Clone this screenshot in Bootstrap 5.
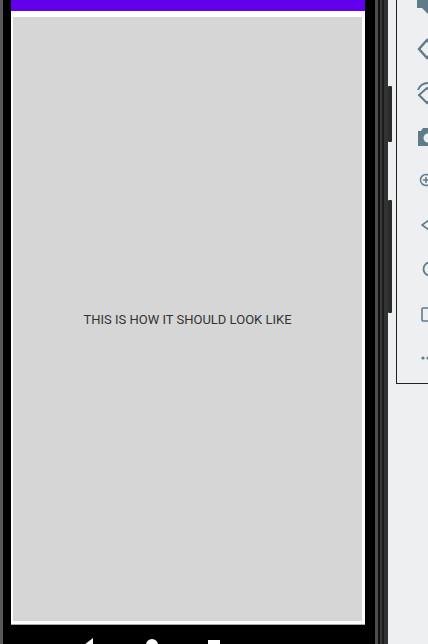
<!doctype html>
<html lang="en">
<head>
<meta charset="utf-8">
<title>Emulator preview</title>
<link href="https://cdn.jsdelivr.net/npm/bootstrap@5.3.0/dist/css/bootstrap.min.css" rel="stylesheet">
<style>
html,body{height:644px;overflow:hidden;margin:0;background:#eeeff1}
.stage{width:428px;height:644px;overflow:hidden}
.device{width:388px;height:644px;flex:none;position:relative;background:#000;border-left:3px solid #58585a;padding-left:8px}
.device-rim{width:13px;flex:none;margin-left:10px;background:linear-gradient(90deg,#4d4d4d 0,#4d4d4d 3px,#111 3px,#111 5px,#3a3a3a 5px,#3a3a3a 7px,#1c1c1c 7px,#1c1c1c 9px,#333 9px,#333 13px)}
.screen-col{width:354px;flex:none;height:644px}
.app-bar{height:11px;flex:none;background:#6200ee}
.app-body{height:614px;flex:none;background:#fff;padding:6px 3px 3px 2px;border-bottom:1px solid #aaa}
.app-card{background:#d6d6d6;color:#333;font:13px/1 Roboto,sans-serif;height:100%}
.nav-keys{flex:1;padding:13px 0 0 72px}
.nav-keys svg{display:block;flex:none}
.side-key{position:absolute;left:385px;width:4px;background:#2b2b2b;border-radius:1px}
.side-a{top:86px;height:56px}
.side-b{top:200px;height:113px}
.tool-panel{width:32px;height:384px;flex:none;margin-left:8px;border:1px solid #222;border-width:0 0 1px 1px;overflow:hidden;padding:0 0 0 20px;background:#eeeff1}
.tool-slot{height:44.5px;flex:none;width:24px}
.tool-slot svg{display:block}
.tool-list{margin-top:-8px}
.nudge-s{margin-left:1px}
.nudge-m{margin-left:2px}
.nudge-l{margin-left:4px}
</style>
</head>
<body>
<div class="stage d-flex">
  <div class="device d-flex">
    <div class="screen-col d-flex flex-column">
      <div class="app-bar"></div>
      <div class="app-body">
        <div class="app-card d-flex align-items-center justify-content-center">THIS IS HOW IT SHOULD LOOK LIKE</div>
      </div>
      <div class="nav-keys d-flex">
        <svg width="14" height="14" viewBox="0 0 14 14"><path d="M10 0v14L1 7z" fill="#fff"/></svg>
        <svg class="ms-5 nudge-s" width="14" height="14" viewBox="0 0 14 14"><circle cx="7" cy="7" r="6" fill="#fff"/></svg>
        <svg class="ms-5" width="14" height="14" viewBox="0 0 14 14"><rect x="1" y="2" width="12" height="12" fill="#fff"/></svg>
      </div>
    </div>
    <div class="device-rim"></div>
    <div class="side-key side-a"></div>
    <div class="side-key side-b"></div>
  </div>
  <div class="tool-panel">
    <div class="tool-list d-flex flex-column">
      <div class="tool-slot"><svg width="24" height="24" viewBox="0 0 24 24" fill="#5f7a89"><path d="M0 8h5l6-6v20l-6-6H0z"/></svg></div>
      <div class="tool-slot"><svg width="24" height="24" viewBox="0 0 24 24" fill="none" stroke="#5f7a89" stroke-width="2.4"><path d="M10 3 2 12l8 9 8-9z"/></svg></div>
      <div class="tool-slot"><svg width="24" height="24" viewBox="0 0 24 24" fill="none" stroke="#5f7a89" stroke-width="2"><path d="M10 7 2 14l8 8 8-8z"/><path d="M1 9c2-5 5-7 10-7"/></svg></div>
      <div class="tool-slot"><svg class="nudge-s" width="24" height="24" viewBox="0 0 24 24"><path d="M0 5h3l2-3h8l2 3h5v15H0z" fill="#5f7a89"/><circle cx="10" cy="12" r="4.5" fill="#eeeff1"/></svg></div>
      <div class="tool-slot"><svg class="nudge-m" width="24" height="24" viewBox="0 0 24 24" fill="none" stroke="#5f7a89" stroke-width="1.5"><circle cx="7" cy="10" r="5.5"/><path d="M4 10h6M7 7v6"/></svg></div>
      <div class="tool-slot"><svg class="nudge-l" width="24" height="24" viewBox="0 0 24 24" fill="none" stroke="#5f7a89" stroke-width="1.6"><path d="M8 5 1 10l7 5"/></svg></div>
      <div class="tool-slot"><svg class="nudge-l" width="24" height="24" viewBox="0 0 24 24" fill="none" stroke="#5f7a89" stroke-width="1.8"><circle cx="9" cy="10" r="6.5"/></svg></div>
      <div class="tool-slot"><svg class="nudge-l" width="24" height="24" viewBox="0 0 24 24" fill="none" stroke="#5f7a89" stroke-width="1.6"><rect x="1" y="4" width="12" height="13" rx="1"/></svg></div>
      <div class="tool-slot"><svg class="nudge-l" width="24" height="24" viewBox="0 0 24 24" fill="#5f7a89"><circle cx="2" cy="10" r="1.6"/><circle cx="7" cy="10" r="1.6"/><circle cx="12" cy="10" r="1.6"/></svg></div>
    </div>
  </div>
</div>
<script src="https://cdn.jsdelivr.net/npm/bootstrap@5.3.0/dist/js/bootstrap.bundle.min.js"></script>
</body>
</html>
